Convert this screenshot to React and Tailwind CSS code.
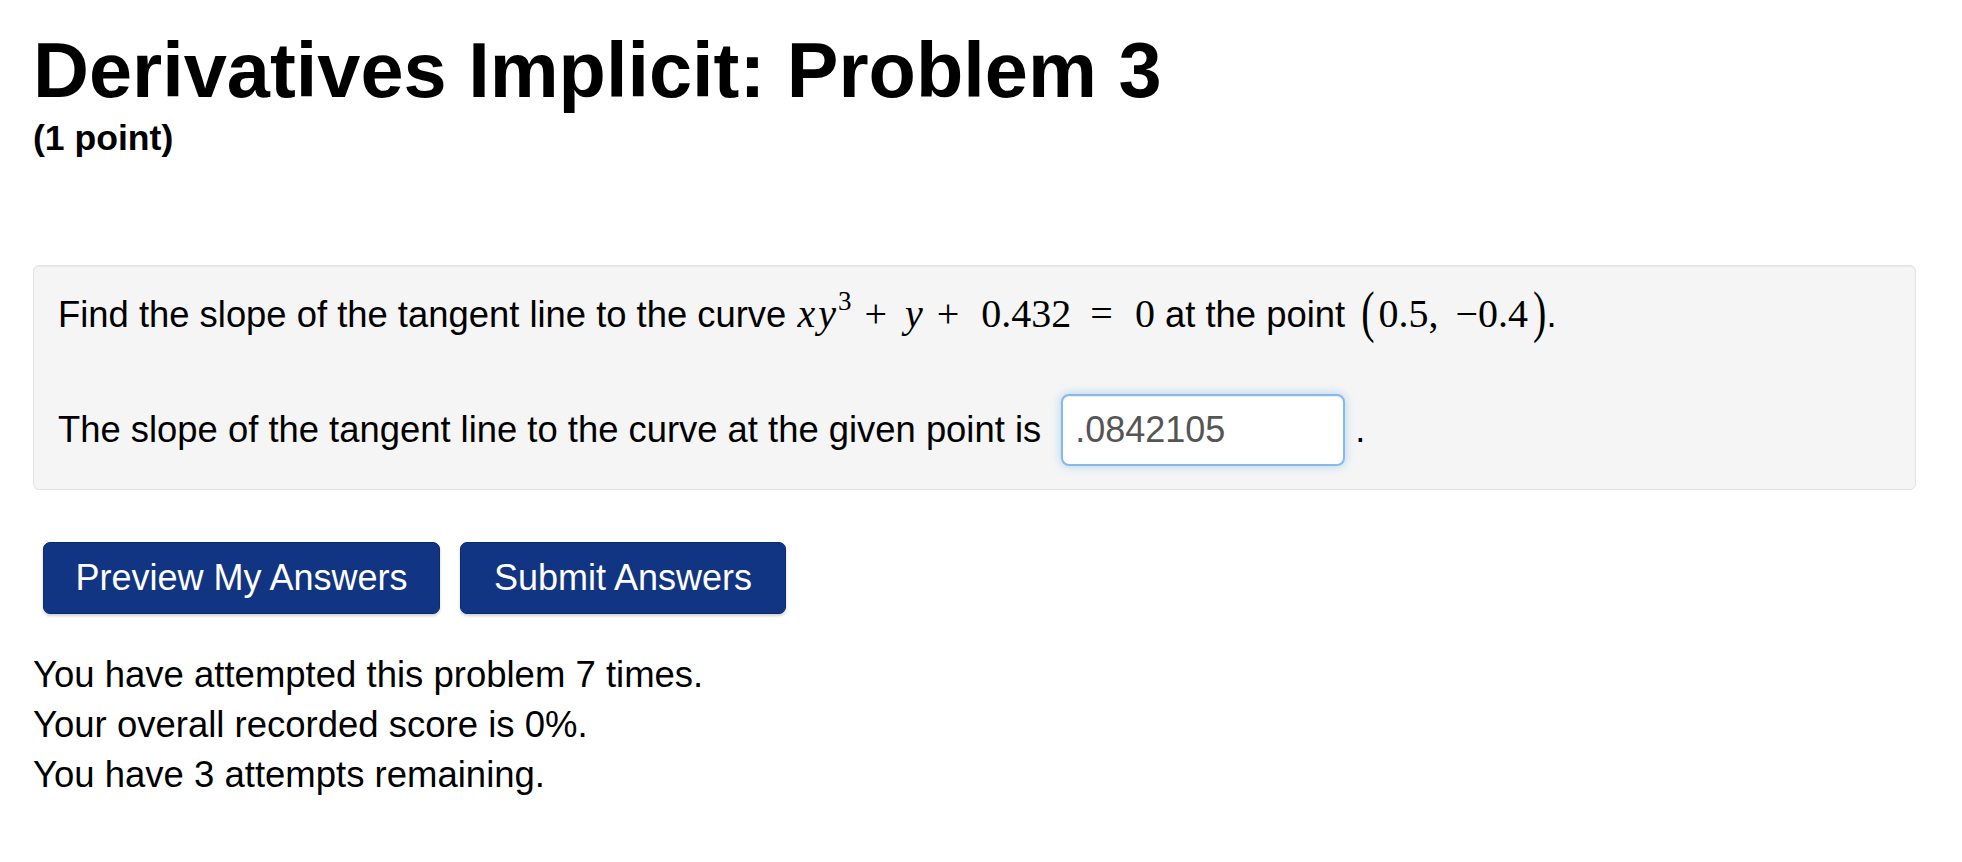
import React from 'react';

const sans = "font-['Liberation_Sans','Helvetica_Neue',Arial,sans-serif]";
const serif = "font-['Liberation_Serif','Times_New_Roman',serif]";

const Paren = ({ children }) => (
  <span className="inline-block leading-none scale-y-[1.4] origin-[50%_60%]">{children}</span>
);

const CurveEquation = () => (
  <span className={`${serif} text-[40px] leading-none ml-[1px]`}>
    <i>x</i>
    <i className="ml-[3px]">y</i>
    <span className="relative -top-[17px] text-[27px] leading-none ml-[2px]">3</span>
    <span className="ml-[13px]">+</span>
    <i className="ml-[18px]">y</i>
    <span className="ml-[14px]">+</span>
    <span className="ml-[22px]">0.432</span>
    <span className="ml-[19px]">=</span>
    <span className="ml-[22px]">0</span>
  </span>
);

const PointValue = () => (
  <span className={`${serif} text-[40px] leading-none ml-[6px]`}>
    <Paren>(</Paren>
    <span className="ml-[4px]">0.5,</span>
    <span className="ml-[17px]">−0.4</span>
    <span className="ml-[5px]"><Paren>)</Paren></span>
  </span>
);

const App = () => {
  return (
    <div className={`${sans} min-h-screen bg-white text-black pl-[33px] pr-[46px] pt-[27px]`}>
      <h1 className="text-[77.5px] leading-[86px] font-bold">Derivatives Implicit: Problem 3</h1>
      <div className="mt-[5px] text-[35.6px] leading-[40px] font-bold">(1 point)</div>

      {/* Problem body */}
      <div className="mt-[107px] border border-[#e3e3e3] bg-[#f5f5f5] rounded-md px-6 pt-6 pb-[23px] shadow-[inset_0_1px_1px_rgba(0,0,0,0.05)]">
        <p className="text-[36.4px] leading-[50px] whitespace-nowrap">
          Find the slope of the tangent line to the curve <CurveEquation /> at the point <PointValue />.
        </p>
        <div className="mt-[54px] flex items-center text-[36.4px] leading-[50px]">
          <span className="whitespace-nowrap">The slope of the tangent line to the curve at the given point is</span>
          <input
            type="text"
            defaultValue=".0842105"
            className="ml-[20px] mr-[10px] w-[284px] h-[72px] px-3 bg-white text-[#555] text-[36px] border-2 border-[#86b8ec] rounded-[8px] outline-none shadow-[inset_0_1px_1px_rgba(0,0,0,0.075),0_0_10px_rgba(102,175,233,0.5)]"
          />
          <span>.</span>
        </div>
      </div>

      {/* Actions */}
      <div className="mt-[52px] ml-[10px] flex gap-[20px]">
        <button className="w-[397px] h-[72px] bg-[#113582] border border-[#0b2b6d] rounded-[7px] text-white text-[36px] text-center shadow-[0_2px_3px_rgba(0,0,0,0.18)]">
          Preview My Answers
        </button>
        <button className="w-[326px] h-[72px] bg-[#113582] border border-[#0b2b6d] rounded-[7px] text-white text-[36px] text-center shadow-[0_2px_3px_rgba(0,0,0,0.18)]">
          Submit Answers
        </button>
      </div>

      <div className="mt-[36px] text-[36.5px] leading-[50px]">
        <div>You have attempted this problem 7 times.</div>
        <div>Your overall recorded score is 0%.</div>
        <div>You have 3 attempts remaining.</div>
      </div>
    </div>
  );
};

export default App;
